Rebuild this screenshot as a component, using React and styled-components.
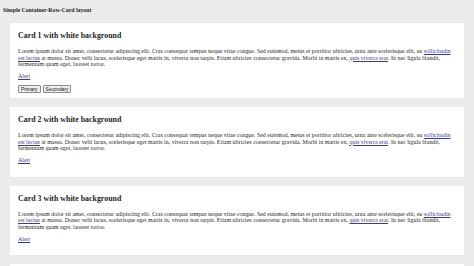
import React from "react";
import styled, { createGlobalStyle } from "styled-components";

const GlobalStyle = createGlobalStyle`
  html, body {
    margin: 0;
    padding: 0;
    background: #ebebeb;
    overflow: hidden;
  }
  body {
    font-family: "Liberation Serif", "Times New Roman", serif;
    color: #1f1f1f;
  }
`;

const Page = styled.div`
  display: flex;
  flex-direction: column;
`;

const PageTitle = styled.h1`
  margin: 0;
  padding: 7px 3px 5px;
  font-size: 5.8px;
  line-height: 6px;
  font-weight: bold;
`;

const Container = styled.div`
  display: flex;
  flex-direction: column;
  gap: 9px;
  padding: 5px 10px 0;
`;

const Row = styled.div`
  display: flex;
`;

const Card = styled.div`
  flex: 1;
  background: #ffffff;
  padding: 8px 8px ${(p) => (p.$tight ? "5px" : "13px")};
  display: flex;
  flex-direction: column;
`;

const CardTitle = styled.h2`
  margin: 0 0 8px;
  font-size: 7.9px;
  line-height: 9px;
  font-weight: bold;
`;

const Text = styled.p`
  margin: 0 0 5px;
  font-size: 5.95px;
  line-height: 6.7px;
`;

const Link = styled.a`
  color: #3838a6;
  text-decoration: underline;
  text-decoration-thickness: 0.5px;
`;

const AlertLink = styled(Link)`
  font-size: 5.95px;
  line-height: 6.7px;
  align-self: flex-start;
`;

const Buttons = styled.div`
  display: flex;
  gap: 2px;
  margin-top: 5px;
`;

const Button = styled.button`
  font-family: "Liberation Sans", Arial, sans-serif;
  font-size: 4.8px;
  line-height: 5px;
  padding: 1px 2px;
  height: 8px;
  background: #efefef;
  color: #111;
  border: 0.6px solid #8a8a8a;
  border-radius: 1px;
`;

const cards = [
  { id: 1, buttons: true },
  { id: 2 },
  { id: 3 },
  { id: 4 },
];

const CardBody = () => (
  <Text>
    Lorem ipsum dolor sit amet, consectetur adipiscing elit. Cras consequat
    tempus neque vitae congue. Sed euismod, metus et porttitor ultricies, urna
    ante scelerisque elit, eu <Link href="#">sollicitudin est lectus</Link> at
    massa. Donec velit lacus, scelerisque eget mattis in, viverra non turpis.
    Etiam ultricies consectetur gravida. Morbi in mattis ex,{" "}
    <Link href="#">quis viverra erat</Link>. In nec ligula blandit, fermentum
    quam eget, laoreet tortor.
  </Text>
);

export default function App() {
  return (
    <Page>
      <GlobalStyle />
      <PageTitle>Simple Container-Row-Card layout</PageTitle>
      <Container>
        {cards.map((c) => (
          <Row key={c.id}>
            <Card $tight={c.buttons}>
              <CardTitle>Card {c.id} with white background</CardTitle>
              <CardBody />
              <AlertLink href="#">Alert</AlertLink>
              {c.buttons && (
                <Buttons>
                  <Button>Primary</Button>
                  <Button>Secondary</Button>
                </Buttons>
              )}
            </Card>
          </Row>
        ))}
      </Container>
    </Page>
  );
}
